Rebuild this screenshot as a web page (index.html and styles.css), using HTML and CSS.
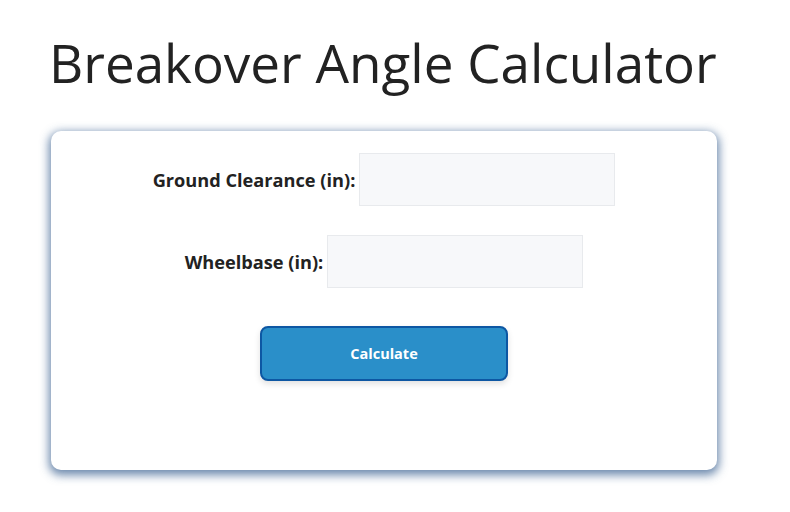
FILE: index.html
```html
<!DOCTYPE html>
<html lang="en">
<head>
<meta charset="utf-8">
<title>Breakover Angle Calculator</title>
<link rel="stylesheet" href="styles.css">
</head>
<body>
<div class="page">
  <h1 class="title">Breakover Angle Calculator</h1>
  <div class="card">
    <div class="row">
      <label class="label" for="gc">Ground Clearance (in):</label>
      <input class="field" id="gc" type="text">
    </div>
    <div class="row">
      <label class="label" for="wb">Wheelbase (in):</label>
      <input class="field" id="wb" type="text">
    </div>
    <button class="btn" type="button">Calculate</button>
  </div>
</div>
</body>
</html>
```
FILE: styles.css
```css
html, body {
  margin: 0;
  padding: 0;
  background: #ffffff;
}
.page {
  padding: 28px 0 40px 51px;
  font-family: "Open Sans", "Noto Sans", sans-serif;
  color: #222222;
}
.title {
  margin: 0 0 0 -2px;
  font-size: 53px;
  font-weight: 400;
  line-height: 70px;
  color: #222222;
}
.card {
  margin-top: 33px;
  width: 666px;
  height: 339px;
  box-sizing: border-box;
  background: #ffffff;
  border-radius: 10px;
  box-shadow: 0 3px 10px 2px rgba(50, 90, 140, 0.72);
  display: flex;
  flex-direction: column;
  align-items: center;
  padding-top: 22px;
}
.row {
  display: flex;
  align-items: center;
  gap: 4px;
  margin-bottom: 29px;
}
.label {
  font-size: 18.2px;
  font-weight: 700;
  color: #222222;
}
.field {
  width: 256px;
  height: 53px;
  box-sizing: border-box;
  margin: 0;
  background: #f7f8fa;
  border: 1px solid #e8eaed;
  border-radius: 0;
  outline: none;
}
.btn {
  margin-top: 9px;
  width: 248px;
  height: 55px;
  background: #2a8fc9;
  border: 2px solid #0d57a3;
  border-radius: 8px;
  color: #ffffff;
  font-family: "Open Sans", "Noto Sans", sans-serif;
  font-size: 14.5px;
  font-weight: 700;
  box-shadow: 0 3px 6px rgba(0, 0, 0, 0.12);
}
```
